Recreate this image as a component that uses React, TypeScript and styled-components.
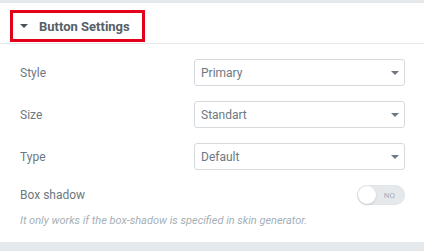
import React from 'react'
import styled, { createGlobalStyle } from 'styled-components'

const GlobalStyle = createGlobalStyle`
  html, body {
    margin: 0;
    padding: 0;
    background: #fff;
  }

  body {
    font-family: Roboto, "Liberation Sans", Arial, sans-serif;
    -webkit-font-smoothing: antialiased;
  }
`

const Panel = styled.div`
  width: 424px;
  height: 251px;
  box-sizing: border-box;
  border-top: 3px solid #e6e9ec;
  border-bottom: 9px solid #e6e9ec;
  background: #fff;
  display: flex;
  flex-direction: column;
`

const Header = styled.div`
  height: 41px;
  box-sizing: border-box;
  padding: 7px 10px 0;
  border-bottom: 1px solid #e6e9ec;
`

const Highlight = styled.div`
  display: inline-flex;
  align-items: center;
  gap: 11px;
  height: 32px;
  box-sizing: border-box;
  padding: 0 12px 0 7px;
  border: 3px solid #e2001a;
`

const Caret = styled.span`
  width: 0;
  height: 0;
  border-left: 4px solid transparent;
  border-right: 4px solid transparent;
  border-top: 4px solid #495157;
`

const Title = styled.span`
  font-size: 13px;
  font-weight: 700;
  color: #556068;
`

const Body = styled.div`
  padding: 15px 19px 0 20px;
  display: flex;
  flex-direction: column;
  gap: 15px;
`

const Row = styled.div`
  display: flex;
  align-items: center;
  justify-content: space-between;
`

const Label = styled.span`
  font-size: 12px;
  color: #6d7882;
`

const SelectBox = styled.div`
  width: 211px;
  height: 27px;
  box-sizing: border-box;
  border: 1px solid #d5dadf;
  border-radius: 3px;
  display: flex;
  align-items: center;
  justify-content: space-between;
  padding: 0 5px 0 6px;
  font-size: 12px;
  color: #6d7882;
`

const SelectCaret = styled.span`
  width: 0;
  height: 0;
  border-left: 4px solid transparent;
  border-right: 4px solid transparent;
  border-top: 4px solid #6d7882;
`

const Toggle = styled.div`
  width: 48px;
  height: 20px;
  box-sizing: border-box;
  border-radius: 10px;
  background: #e6e9ec;
  display: flex;
  align-items: center;
  justify-content: flex-end;
  padding-right: 10px;
  position: relative;
  font-size: 8px;
  color: #a4afb7;
  box-shadow: inset 0 0 1px rgba(0, 0, 0, 0.12);
`

const Knob = styled.span`
  position: absolute;
  left: 1px;
  top: 1px;
  width: 18px;
  height: 18px;
  border-radius: 50%;
  background: #fff;
  box-shadow: 0 1px 2px rgba(0, 0, 0, 0.15);
`

const Note = styled.div`
  margin-top: -6px;
  font-size: 11px;
  font-style: italic;
  color: #a4afb7;
`

type Field = { label: string; value: string }

const fields: Field[] = [
  { label: 'Style', value: 'Primary' },
  { label: 'Size', value: 'Standart' },
  { label: 'Type', value: 'Default' },
]

export default function App() {
  return (
    <>
      <GlobalStyle />
      <Panel>
        <Header>
          <Highlight>
            <Caret />
            <Title>Button Settings</Title>
          </Highlight>
        </Header>
        <Body>
          {fields.map((f) => (
            <Row key={f.label}>
              <Label>{f.label}</Label>
              <SelectBox>
                {f.value}
                <SelectCaret />
              </SelectBox>
            </Row>
          ))}
          <Row>
            <Label>Box shadow</Label>
            <Toggle>
              <Knob />
              NO
            </Toggle>
          </Row>
          <Note>It only works if the box-shadow is specified in skin generator.</Note>
        </Body>
      </Panel>
    </>
  )
}
